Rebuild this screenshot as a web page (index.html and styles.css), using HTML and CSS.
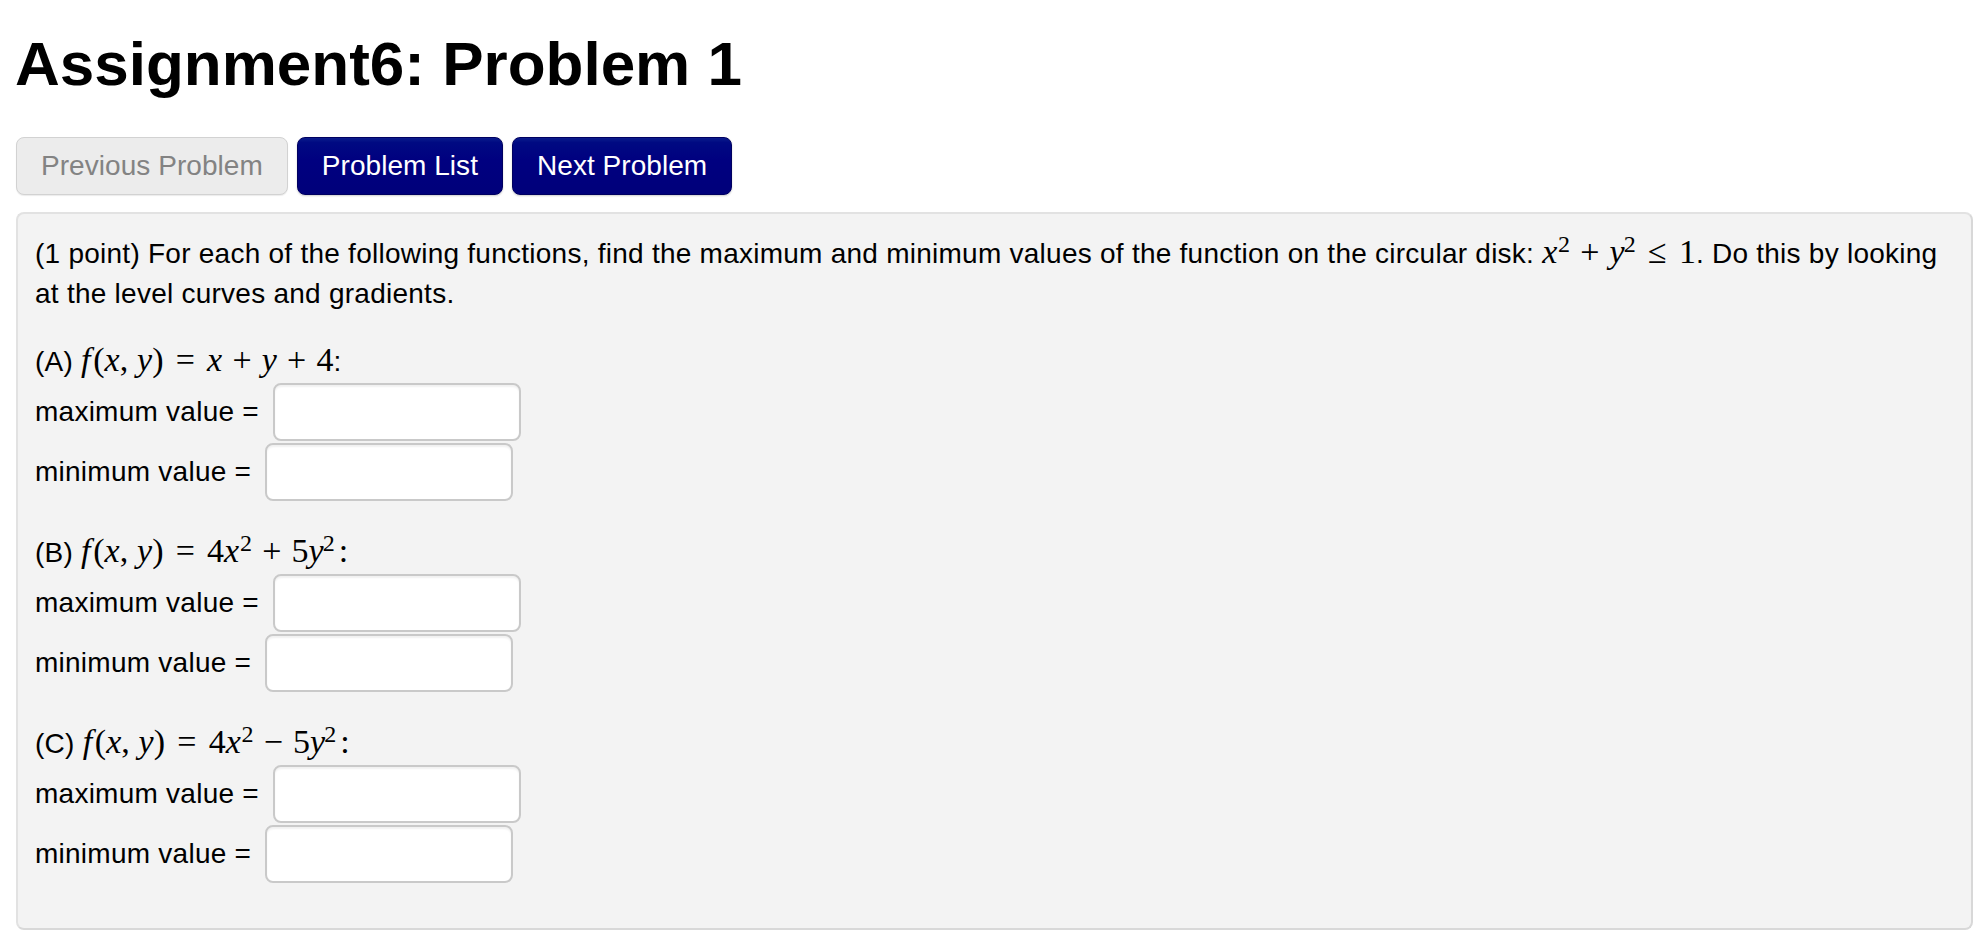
FILE: index.html
```html
<!DOCTYPE html>
<html lang="en">
<head>
<meta charset="utf-8">
<title>Assignment6: Problem 1</title>
<link rel="stylesheet" href="styles.css">
</head>
<body>
<div class="page">
  <h2 class="title">Assignment6: Problem 1</h2>
  <div class="nav">
    <span class="btn btn-disabled">Previous Problem</span>
    <span class="btn btn-primary">Problem List</span>
    <span class="btn btn-primary">Next Problem</span>
  </div>
  <div class="problem">
    <p class="intro">(1 point) For each of the following functions, find the maximum and minimum values of the function on the circular disk: <span class="m"><i>x</i><sup>2</sup><span class="bin">+</span><i>y</i><sup class="sy">2</sup><span class="rel">≤</span>1</span>. Do this by looking at the level curves and gradients.</p>

    <div class="part">
      <div class="part-head">(A) <span class="m"><i class="f">f</i>(<i>x</i>,<span class="thin"></span><i>y</i>)<span class="rel">=</span><i>x</i><span class="bin">+</span><i>y</i><span class="bin">+</span>4</span>:</div>
      <div class="row"><span class="label">maximum value =</span><input class="answer" type="text"></div>
      <div class="row"><span class="label">minimum value =</span><input class="answer" type="text"></div>
    </div>

    <div class="part">
      <div class="part-head">(B) <span class="m"><i class="f">f</i>(<i>x</i>,<span class="thin"></span><i>y</i>)<span class="rel">=</span>4<i>x</i><sup>2</sup><span class="bin">+</span>5<i>y</i><sup class="sy">2</sup><span class="colon">:</span></span></div>
      <div class="row"><span class="label">maximum value =</span><input class="answer" type="text"></div>
      <div class="row"><span class="label">minimum value =</span><input class="answer" type="text"></div>
    </div>

    <div class="part">
      <div class="part-head">(C) <span class="m"><i class="f">f</i>(<i>x</i>,<span class="thin"></span><i>y</i>)<span class="rel">=</span>4<i>x</i><sup>2</sup><span class="bin">−</span>5<i>y</i><sup class="sy">2</sup><span class="colon">:</span></span></div>
      <div class="row"><span class="label">maximum value =</span><input class="answer" type="text"></div>
      <div class="row"><span class="label">minimum value =</span><input class="answer" type="text"></div>
    </div>
  </div>
</div>
</body>
</html>
```

FILE: styles.css
```css
* { box-sizing: border-box; }

html, body {
  margin: 0;
  padding: 0;
  background: #ffffff;
}

body {
  font-family: "Liberation Sans", Arial, Helvetica, sans-serif;
  font-size: 28px;
  line-height: 40px;
  letter-spacing: 0.25px;
  color: #000000;
}

.page {
  padding: 0 11px 0 16px;
}

.title {
  margin: 24px 0 0 -1px;
  font-size: 62px;
  line-height: 80px;
  font-weight: bold;
  letter-spacing: 0;
  color: #000;
}

.nav {
  margin-top: 33px;
  display: flex;
  gap: 9px;
}

.btn {
  display: inline-block;
  height: 58px;
  padding: 8px 24px;
  font-size: 28px;
  line-height: 40px;
  letter-spacing: 0.05px;
  border-radius: 8px;
  white-space: nowrap;
}

.btn-disabled {
  background: #ececec;
  color: #838383;
  border: 1px solid #d2d2d2;
  box-shadow: 0 1px 1px rgba(0, 0, 0, 0.08);
}

.btn-primary {
  background: linear-gradient(#0b1c8c 0, #000a82 8%, #000080 40%, #00007a 100%);
  color: #ffffff;
  border: 1px solid #000060;
  box-shadow: 0 1px 2px rgba(0, 0, 0, 0.2);
}

.problem {
  margin-top: 17px;
  background: #f3f3f3;
  border: 2px solid #e2e2e2;
  border-right-color: #d8d8d8;
  border-bottom-color: #d8d8d8;
  border-radius: 8px;
  padding: 20px 17px 40px 17px;
  height: 718px;
}

.intro {
  margin: 0 0 28px 0;
}

.part {
  margin-bottom: 31px;
}

.part-head {
  height: 40px;
}

.row {
  display: flex;
  align-items: center;
  height: 60px;
}

.label {
  white-space: nowrap;
}

.answer {
  margin-left: 14px;
  width: 248px;
  height: 58px;
  border: 2px solid #c9c9c9;
  border-radius: 8px;
  background: #ffffff;
  box-shadow: inset 0 2px 2px rgba(0, 0, 0, 0.06);
  font-family: inherit;
  font-size: 28px;
  padding: 8px 12px;
}

/* math */
.m {
  font-family: "Liberation Serif", "Times New Roman", serif;
  font-size: 34px;
  line-height: 0;
  letter-spacing: 0;
  white-space: nowrap;
}

.m i {
  font-style: italic;
}

.m .f {
  margin-right: 0.08em;
}

.m sup {
  font-size: 0.707em;
  vertical-align: 0.45em;
  line-height: 0;
  margin-left: 0.03em;
}

.m sup.sy {
  margin-left: -0.04em;
}

.bin {
  margin: 0 0.3em;
}

.rel {
  margin: 0 0.36em;
}

.thin {
  display: inline-block;
  width: 0.26em;
}

.colon {
  margin-left: 0.12em;
}
```
